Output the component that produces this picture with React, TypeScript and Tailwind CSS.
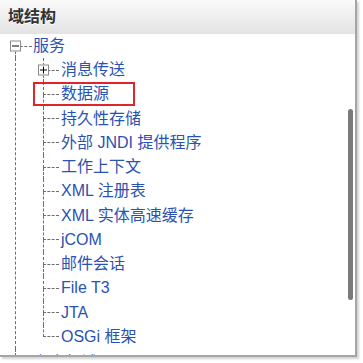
import React from "react";

const font = { fontFamily: '"Liberation Sans", "Noto Sans CJK SC", sans-serif' };

function Box({ open }: { open: boolean }) {
  return (
    <div className="absolute left-[-5px] top-1/2 -translate-y-1/2 w-[11px] h-[11px] border border-[#8a8a8a] bg-white flex items-center justify-center">
      <div className="w-[7px] h-[1px] bg-black" />
      {!open && <div className="absolute w-[1px] h-[7px] bg-black" />}
    </div>
  );
}

function Connector({
  width,
  top = true,
  bottom = true,
  box,
}: {
  width: string;
  top?: boolean;
  bottom?: boolean;
  box?: "open" | "closed";
}) {
  return (
    <div className={`relative flex flex-col shrink-0 ${width}`}>
      <div
        className={`flex-1 border-b border-dashed border-[#6e6e6e] ${top ? "border-l" : ""}`}
      />
      <div className={`flex-1 border-dashed border-[#6e6e6e] ${bottom ? "border-l" : ""}`} />
      {box && <Box open={box === "open"} />}
    </div>
  );
}

const children = [
  "消息传送",
  "数据源",
  "持久性存储",
  "外部 JNDI 提供程序",
  "工作上下文",
  "XML 注册表",
  "XML 实体高速缓存",
  "jCOM",
  "邮件会话",
  "File T3",
  "JTA",
  "OSGi 框架",
];

export default function App() {
  return (
    <div className="w-[363px] h-[363px] bg-white" style={font}>
      <div className="relative w-[357px] h-[357px] border-r-2 border-b-2 border-[#a5a5a5] shadow-[2px_2px_2px_rgba(0,0,0,0.18)] flex flex-col overflow-hidden">
        <div className="h-[34px] shrink-0 bg-gradient-to-b from-[#fafafa] to-[#e3e3e3] flex items-center px-[8px] text-[16px] font-bold text-[#333] [text-shadow:0_1px_0_#fff]">
          域结构
        </div>

        <div className="flex-1 overflow-hidden text-[16px] text-[#2a52b2] leading-none">
          <div className="flex h-[24px] pl-[15px]">
            <Connector width="w-[17px]" top={false} box="open" />
            <span className="self-center pl-[1px]">服务</span>
          </div>

          <div className="ml-[15px] border-l border-dashed border-[#6e6e6e] pl-[27px]">
            {children.map((c, i) => (
              <div key={c} className="relative flex h-[24.25px]">
                <Connector
                  width="w-[16px]"
                  bottom={i < children.length - 1}
                  box={i === 0 ? "closed" : undefined}
                />
                <span className="self-center pl-[2px] whitespace-nowrap">{c}</span>
                {c === "数据源" && (
                  <div className="absolute left-[-10px] top-0 w-[102px] h-[24px] border-2 border-[#e1242c]" />
                )}
              </div>
            ))}
          </div>

          <div className="flex h-[28px] pl-[15px]">
            <Connector width="w-[17px]" box="closed" />
            <span className="self-center pl-[1px]">安全领域</span>
          </div>
        </div>

        <div className="absolute right-[2px] top-[109px] w-[5px] h-[191px] rounded-full bg-[#7a7a7a]" />
      </div>
    </div>
  );
}
